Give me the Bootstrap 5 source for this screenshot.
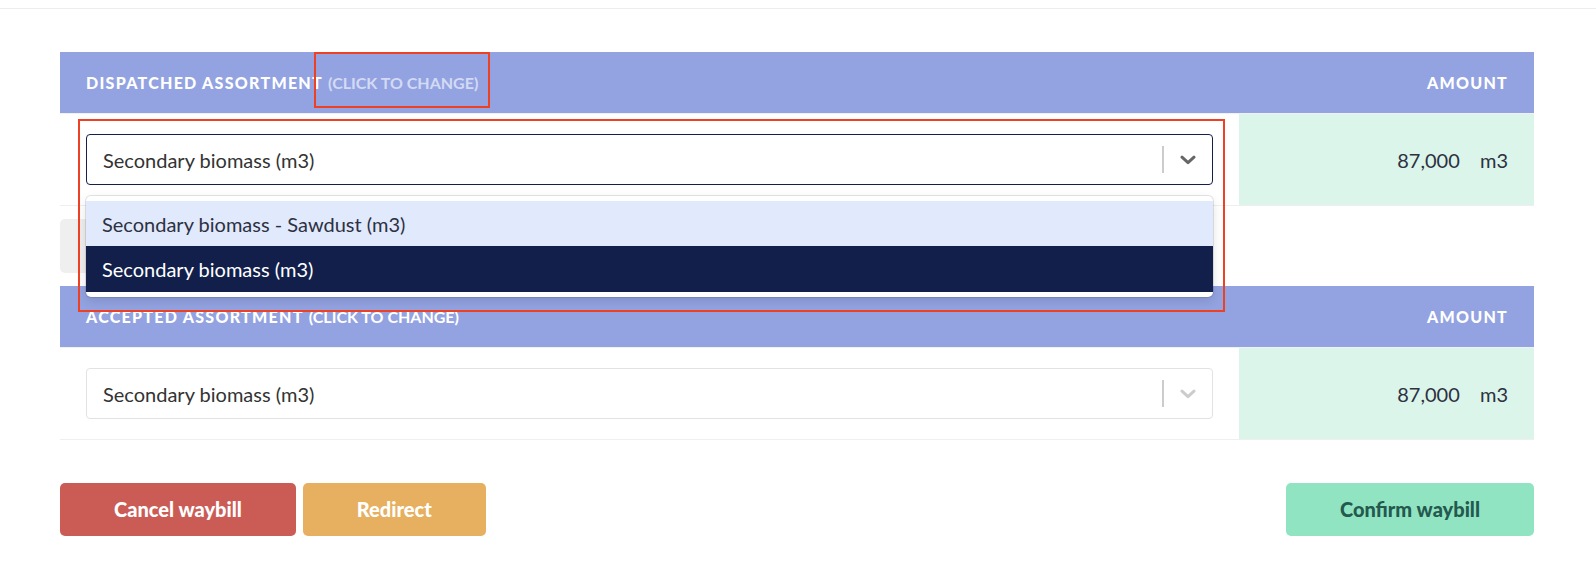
<!DOCTYPE html>
<html lang="en">
<head>
<meta charset="utf-8">
<meta name="viewport" content="width=device-width, initial-scale=1">
<title>Waybill</title>
<link href="https://cdn.jsdelivr.net/npm/bootstrap@5.3.0/dist/css/bootstrap.min.css" rel="stylesheet">
<style>
  body { font-family: Lato, "Liberation Sans", sans-serif; font-size: 20px; line-height: 30px; color: #2d3142; }
  .top-rule { height: 9px; border-bottom: 1px solid #ededed; }
  .page { padding: 43px 62px 38px 60px; }
  .goods { width: 100%; table-layout: fixed; border-collapse: separate; border-spacing: 0; }
  .goods .col-amount { width: 20%; }
  .goods th { height: 61px; padding: 0 26px; background: #93a3e1; color: #fff; font-size: 16px; font-weight: 900; letter-spacing: .08em; }
  .goods td { padding: 20px 26px; border-top: 1px solid #eef1f6; border-bottom: 1px solid #efefef; }
  .goods td.amount { background: #dcf5ea; text-align: right; }
  .goods .hint { position: relative; font-weight: 700; letter-spacing: 0; }
  .hint.dim { color: #d3daf4; }
  .unit { margin-left: 15px; }
  .picker { position: relative; }
  .picker select { display: block; width: 100%; height: 51px; padding: 0 64px 0 16px; border: 1px solid #e2e2e2; border-radius: 4px; background: #fff; color: #333; appearance: none; outline: 0; }
  .picker.open select { border-color: #14204a; }
  .arrow { position: absolute; top: 12px; right: 17px; height: 27px; padding-left: 16px; border-left: 2px solid #ccc; color: #ccc; pointer-events: none; }
  .open .arrow { color: #666; }
  .options { position: absolute; z-index: 2; top: 62px; left: 0; right: 0; padding: 5px 0; background: #fff; border-radius: 5px; box-shadow: 0 0 0 1px rgba(0,0,0,.1), 0 4px 11px rgba(0,0,0,.12); }
  .options button { display: block; width: 100%; height: 45px; padding: 0 16px; border: 0; background: #e1e9fd; color: #2d3142; text-align: left; }
  .options button.chosen { height: 46px; background: #121f4b; color: #fff; }
  .callout { position: absolute; z-index: 3; border: 2px solid #ee4023; pointer-events: none; }
  .callout-hint { inset: -21px -12px -16px -14px; }
  .callout-picker { inset: -15px -12px -127px -8px; }
  .action { height: 53px; padding: 0 54px 2px; border: 0; border-radius: 5px; font-weight: 900; color: #fff; }
  .action-plain { width: 160px; height: 54px; margin: 13px 0; background: #efefef; }
  .actions { margin-top: 43px; gap: 7px; }
  .action-cancel { background: #ca5c55; }
  .action-redirect { background: #e6b060; }
  .action-confirm { background: #90e4c1; color: #24594f; }
</style>
</head>
<body>
<div class="top-rule"></div>
<main class="page">
  <table class="goods">
    <colgroup><col><col class="col-amount"></colgroup>
    <thead>
      <tr>
        <th scope="col"><label for="dispatched">DISPATCHED ASSORTMENT</label> <span class="hint dim">(CLICK TO CHANGE)<span class="callout callout-hint"></span></span></th>
        <th scope="col" class="text-end">AMOUNT</th>
      </tr>
    </thead>
    <tbody>
      <tr>
        <td>
          <div class="picker open">
            <select id="dispatched"><option>Secondary biomass (m3)</option><option>Secondary biomass - Sawdust (m3)</option></select>
            <span class="arrow d-flex align-items-center"><svg width="16" height="10" viewBox="0 0 16 10" fill="none" stroke="currentColor" stroke-width="3" stroke-linecap="round" stroke-linejoin="round" aria-hidden="true"><path d="M2 2.2 8 7.6 14 2.2"/></svg></span>
            <div class="options">
              <button type="button">Secondary biomass - Sawdust (m3)</button>
              <button type="button" class="chosen">Secondary biomass (m3)</button>
            </div>
            <span class="callout callout-picker"></span>
          </div>
        </td>
        <td class="amount">87,000 <span class="unit">m3</span></td>
      </tr>
    </tbody>
  </table>
  <button type="button" class="action action-plain d-block" aria-label="Add"></button>
  <table class="goods">
    <colgroup><col><col class="col-amount"></colgroup>
    <thead>
      <tr>
        <th scope="col"><label for="accepted">ACCEPTED ASSORTMENT</label> <span class="hint">(CLICK TO CHANGE)</span></th>
        <th scope="col" class="text-end">AMOUNT</th>
      </tr>
    </thead>
    <tbody>
      <tr>
        <td>
          <div class="picker">
            <select id="accepted"><option>Secondary biomass (m3)</option></select>
            <span class="arrow d-flex align-items-center"><svg width="16" height="10" viewBox="0 0 16 10" fill="none" stroke="currentColor" stroke-width="3" stroke-linecap="round" stroke-linejoin="round" aria-hidden="true"><path d="M2 2.2 8 7.6 14 2.2"/></svg></span>
          </div>
        </td>
        <td class="amount">87,000 <span class="unit">m3</span></td>
      </tr>
    </tbody>
  </table>
  <div class="actions d-flex">
    <button type="button" class="action action-cancel">Cancel waybill</button>
    <button type="button" class="action action-redirect">Redirect</button>
    <button type="button" class="action action-confirm ms-auto">Confirm waybill</button>
  </div>
</main>
<script src="https://cdn.jsdelivr.net/npm/bootstrap@5.3.0/dist/js/bootstrap.bundle.min.js"></script>
</body>
</html>
